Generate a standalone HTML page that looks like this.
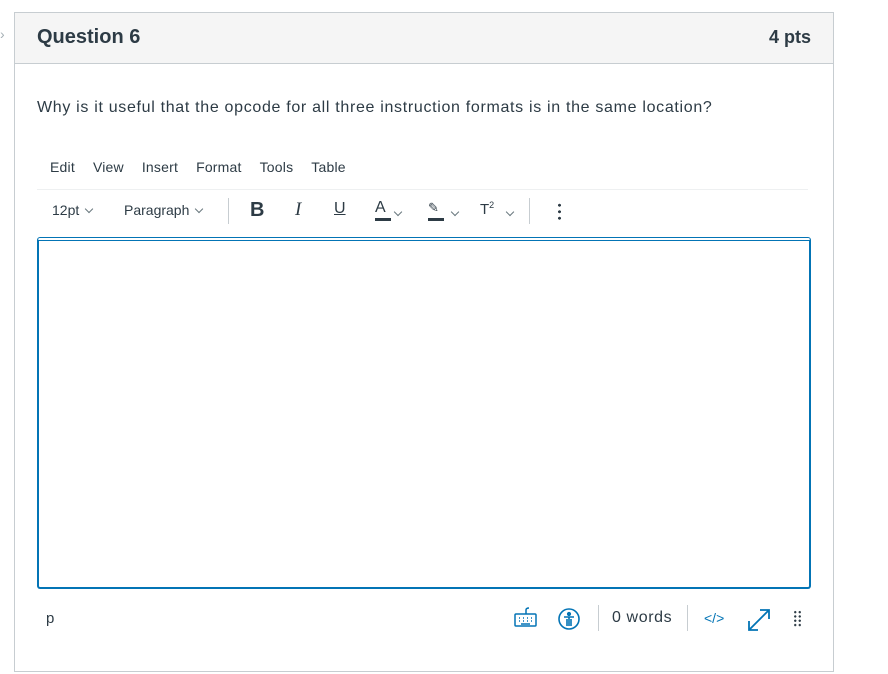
<!DOCTYPE html>
<html><head><style>
body{margin:0;width:888px;height:674px;background:#fff;font-family:"Liberation Sans",sans-serif;color:#2d3b45;position:relative;overflow:hidden}
.a{position:absolute;white-space:nowrap}
.card{position:absolute;left:14px;top:12px;width:818px;height:658px;border:1px solid #c7cdd1}
.hdr{position:absolute;left:0;top:0;width:818px;height:50px;background:#f5f5f5;border-bottom:1px solid #c7cdd1}
.m{font-size:14px;color:#2d3b45}
.chev{display:inline-block;width:5px;height:5px;border-right:1px solid #68777d;border-bottom:1px solid #68777d;transform:rotate(45deg);margin-left:7px;position:relative;top:-3px}
</style></head><body>
<div class="a" style="left:0;top:26px;color:#a5afb5;font-size:14px">›</div>
<div class="card"><div class="hdr"></div></div>
<div class="a" style="left:37px;top:26px;font-size:20px;font-weight:bold">Question 6</div>
<div class="a" style="right:77px;top:27px;font-size:18px;font-weight:bold;color:#2d3b45">4 pts</div>
<div class="a" style="left:37px;top:99px;font-size:16px;letter-spacing:0.68px">Why is it useful that the opcode for all three instruction formats is in the same location?</div>
<div class="a m" style="left:50px;top:159px;letter-spacing:0.2px">Edit<span style="margin-left:18px">View</span><span style="margin-left:18px">Insert</span><span style="margin-left:18px">Format</span><span style="margin-left:18px">Tools</span><span style="margin-left:18px">Table</span></div>
<div class="a" style="left:37px;top:189px;width:771px;height:1px;background:#eef0f1"></div>
<div class="a m" style="left:52px;top:202px">12pt<span class="chev"></span></div>
<div class="a m" style="left:124px;top:202px">Paragraph<span class="chev"></span></div>
<div class="a" style="left:228px;top:198px;width:1px;height:26px;background:#c7cdd1"></div>
<div class="a" style="left:250px;top:199px;font-size:20px;font-weight:bold">B</div>
<div class="a" style="left:295px;top:199px;font-size:19px;font-style:italic;font-family:'Liberation Serif',serif">I</div>
<div class="a" style="left:334px;top:200px;font-size:16px;text-decoration:underline">U</div>
<div class="a" style="left:375px;top:199px;font-size:16px">A</div>
<div class="a" style="left:375px;top:218px;width:16px;height:3px;background:#2d3b45"></div>
<div class="a" style="left:395px;top:205px"><span class="chev" style="margin:0"></span></div>
<div class="a" style="left:428px;top:200px;font-size:13px">✎</div>
<div class="a" style="left:428px;top:218px;width:16px;height:3px;background:#2d3b45"></div>
<div class="a" style="left:452px;top:205px"><span class="chev" style="margin:0"></span></div>
<div class="a" style="left:480px;top:200px;font-size:15px">T<sup style="font-size:9px">2</sup></div>
<div class="a" style="left:507px;top:205px"><span class="chev" style="margin:0"></span></div>
<div class="a" style="left:529px;top:198px;width:1px;height:26px;background:#c7cdd1"></div>
<div class="a" style="left:558px;top:202px;width:3px;height:18px;background:radial-gradient(circle,#2d3b45 1.4px,transparent 1.6px) 0 0/3px 6.5px"></div>
<div class="a" style="left:37px;top:237px;width:770px;height:346px;border:2px solid #0374b5;border-top:4px double #0374b5;border-radius:3px"></div>
<div class="a m" style="left:46px;top:610px;font-size:15px">p</div>
<svg class="a" style="left:514px;top:606px" width="24" height="22" viewBox="0 0 24 22" fill="none" stroke="#0374b5" stroke-width="1.5"><rect x="1" y="8" width="21" height="12" rx="1"/><path d="M12 8V4q0-2 3-2"/><path d="M5 12h1M9 12h1M13 12h1M17 12h1M5 15h1M9 15h1M13 15h1M17 15h1M7 18h9"/></svg>
<svg class="a" style="left:557px;top:607px" width="24" height="24" viewBox="0 0 24 24" fill="none" stroke="#0374b5" stroke-width="1.6"><circle cx="12" cy="12" r="10"/><circle cx="12" cy="7" r="1.3" fill="#0374b5"/><path d="M7 10h10M12 10v9M10 12v7M14 12v7"/></svg>
<div class="a" style="left:598px;top:605px;width:1px;height:26px;background:#c7cdd1"></div>
<div class="a" style="left:612px;top:609px;font-size:16px;letter-spacing:0.6px">0 words</div>
<div class="a" style="left:687px;top:605px;width:1px;height:26px;background:#c7cdd1"></div>
<div class="a" style="left:704px;top:610px;font-size:14px;color:#0374b5">&lt;/&gt;</div>
<svg class="a" style="left:746px;top:607px" width="26" height="26" viewBox="0 0 26 26" fill="none" stroke="#0374b5" stroke-width="1.8"><path d="M3 23L23 3M14 3h9v9M3 14v9h9"/></svg>
<div class="a" style="left:793px;top:610px;width:9px;height:17px;background:radial-gradient(circle,#2d3b45 1px,transparent 1.3px) 0 0/4.5px 4.3px"></div>
</body></html>
